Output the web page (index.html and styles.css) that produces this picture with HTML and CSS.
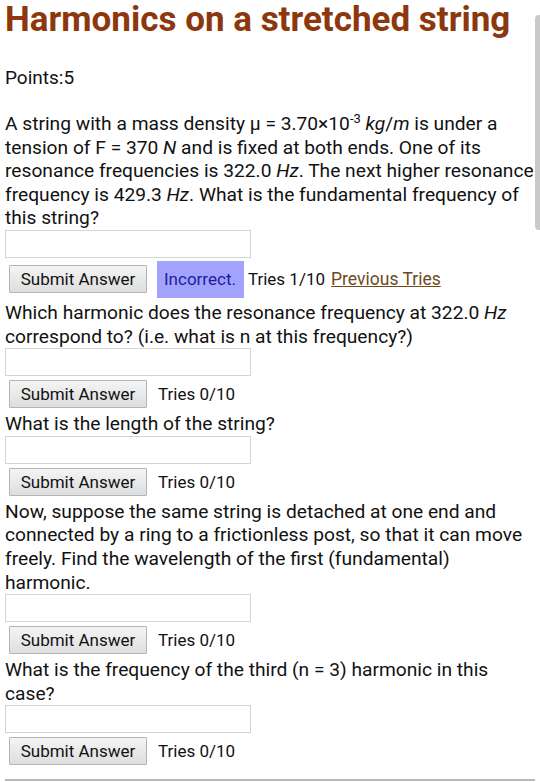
FILE: index.html
```html
<!DOCTYPE html>
<html lang="en">
<head>
<meta charset="utf-8">
<title>Harmonics on a stretched string</title>
<link rel="stylesheet" href="styles.css">
</head>
<body>
<h1 class="title">Harmonics on a stretched string</h1>
<div class="points">Points:5</div>
<div class="problem">
  <div class="question">A string with a mass density μ = 3.70×10<sup>-3</sup> <i>kg</i>/<i>m</i> is under a tension of F = 370 <i>N</i> and is fixed at both ends. One of its resonance frequencies is 322.0 <i>Hz</i>. The next higher resonance frequency is 429.3 <i>Hz</i>. What is the fundamental frequency of this string?</div>
  <input class="answer" type="text">
  <div class="row row-tall">
    <button class="submit" type="button">Submit Answer</button>
    <span class="incorrect">Incorrect.</span>
    <span class="tries tries-after">Tries 1/10</span>
    <a class="prev" href="#">Previous Tries</a>
  </div>

  <div class="question">Which harmonic does the resonance frequency at 322.0 <i>Hz</i> correspond to? (i.e. what is n at this frequency?)</div>
  <input class="answer" type="text">
  <div class="row">
    <button class="submit" type="button">Submit Answer</button>
    <span class="tries">Tries 0/10</span>
  </div>

  <div class="question">What is the length of the string?</div>
  <input class="answer" type="text">
  <div class="row">
    <button class="submit" type="button">Submit Answer</button>
    <span class="tries">Tries 0/10</span>
  </div>

  <div class="question">Now, suppose the same string is detached at one end and connected by a ring to a frictionless post, so that it can move freely. Find the wavelength of the first (fundamental) harmonic.</div>
  <input class="answer" type="text">
  <div class="row">
    <button class="submit" type="button">Submit Answer</button>
    <span class="tries">Tries 0/10</span>
  </div>

  <div class="question">What is the frequency of the third (n = 3) harmonic in this case?</div>
  <input class="answer" type="text">
  <div class="row">
    <button class="submit" type="button">Submit Answer</button>
    <span class="tries">Tries 0/10</span>
  </div>
</div>
<hr class="rule">
<div class="scrollbar"></div>
</body>
</html>
```
FILE: styles.css
```css
html, body {
  margin: 0;
  padding: 0;
  background: #ffffff;
}
body {
  padding: 0 5px;
  font-family: Roboto, "Noto Sans", sans-serif;
  font-size: 17px;
  color: #111111;
  overflow: hidden;
}
.title {
  margin: 0;
  font-size: 35px;
  line-height: 40px;
  font-weight: 700;
  color: #8c370c;
}
.points {
  margin-top: 26px;
  line-height: 23px;
  font-size: 19px;
}
.problem {
  margin-top: 23px;
}
.question {
  font-size: 19.2px;
  line-height: 23.6px;
}
.question sup {
  font-size: 13px;
  line-height: 0;
  vertical-align: 7px;
}
.answer {
  display: block;
  box-sizing: border-box;
  width: 246px;
  height: 28px;
  margin: 0;
  border: 1px solid #d4d4d4;
  background: #fff;
  padding: 0 4px;
}
.row {
  display: flex;
  align-items: center;
  padding: 3px 0;
  min-height: 30px;
}
.submit {
  box-sizing: border-box;
  height: 28px;
  width: 138px;
  margin: 1px 0 1px 4px;
  padding: 0;
  border: 1px solid #b5b5b5;
  border-radius: 1px;
  background: linear-gradient(#f4f4f4, #dedede);
  font-family: Roboto, "Noto Sans", sans-serif;
  font-size: 17px;
  color: #111;
}
.tries {
  margin-left: 11px;
}
.tries-after {
  margin-left: 4px;
}
.incorrect {
  margin-left: 10px;
  height: 37px;
  box-sizing: border-box;
  padding: 0 8px 0 7px;
  display: flex;
  align-items: center;
  background: #a3a3ff;
  color: #1d1d9c;
}
.prev {
  margin-left: 6px;
  color: #6e4a1c;
  text-decoration: underline;
  font-size: 17.5px;
}
.rule {
  margin: 10px 0 0 0;
  border: 0;
  height: 2px;
  background: #b9b9b9;
}
.scrollbar {
  position: fixed;
  right: 0;
  top: 15px;
  width: 5px;
  height: 215px;
  background: #c9c9c9;
  border-radius: 4px 0 0 4px;
}
```
